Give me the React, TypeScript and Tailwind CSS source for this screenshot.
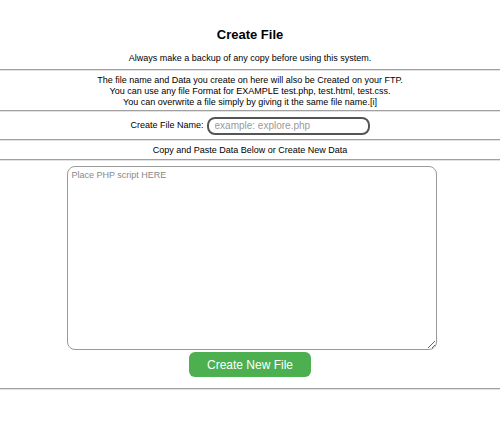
const Rule = () => <div className="h-[2px] border-t border-[#a0a0a0] border-b border-b-[#e2e2e2]" />;

export default function App() {
  return (
    <div className="min-h-[444px] bg-white text-black font-['Liberation_Sans',Arial,sans-serif] text-center">
      <h1 className="pt-[27px] text-[13px] font-bold leading-[16px]">Create File</h1>
      <p className="mt-[9px] text-[9px] leading-[12px]">Always make a backup of any copy before using this system.</p>
      <div className="mt-[5px]">
        <Rule />
      </div>
      <div className="pt-[4px] pb-[2px] text-[9px] leading-[11px]">
        <p>The file name and Data you create on here will also be Created on your FTP.</p>
        <p>You can use any file Format for EXAMPLE test.php, test.html, test.css.</p>
        <p>You can overwrite a file simply by giving it the same file name.[i]</p>
      </div>
      <Rule />
      <div className="flex items-center justify-center gap-[3px] h-[27px] text-[9px]">
        <label>Create File Name:</label>
        <input
          placeholder="example: explore.php"
          className="w-[163px] h-[18px] px-[6px] border-2 border-[#555] rounded-[8px] text-[10px] placeholder:text-[#999] outline-none"
        />
      </div>
      <Rule />
      <p className="h-[18px] leading-[18px] text-[9px]">Copy and Paste Data Below or Create New Data</p>
      <Rule />
      <div className="flex flex-col items-center pt-[5px]">
        <textarea
          placeholder="Place PHP script HERE"
          className="block w-[370px] h-[184px] ml-[3px] px-[4px] py-[2px] border border-[#999] rounded-[8px] text-[9px] placeholder:text-[#888] outline-none resize"
        />
        <button className="mt-[2px] w-[122px] h-[25px] rounded-[6px] bg-[#4caf50] text-white text-[12px]">
          Create New File
        </button>
      </div>
      <div className="mt-[11px]">
        <Rule />
      </div>
    </div>
  );
}
